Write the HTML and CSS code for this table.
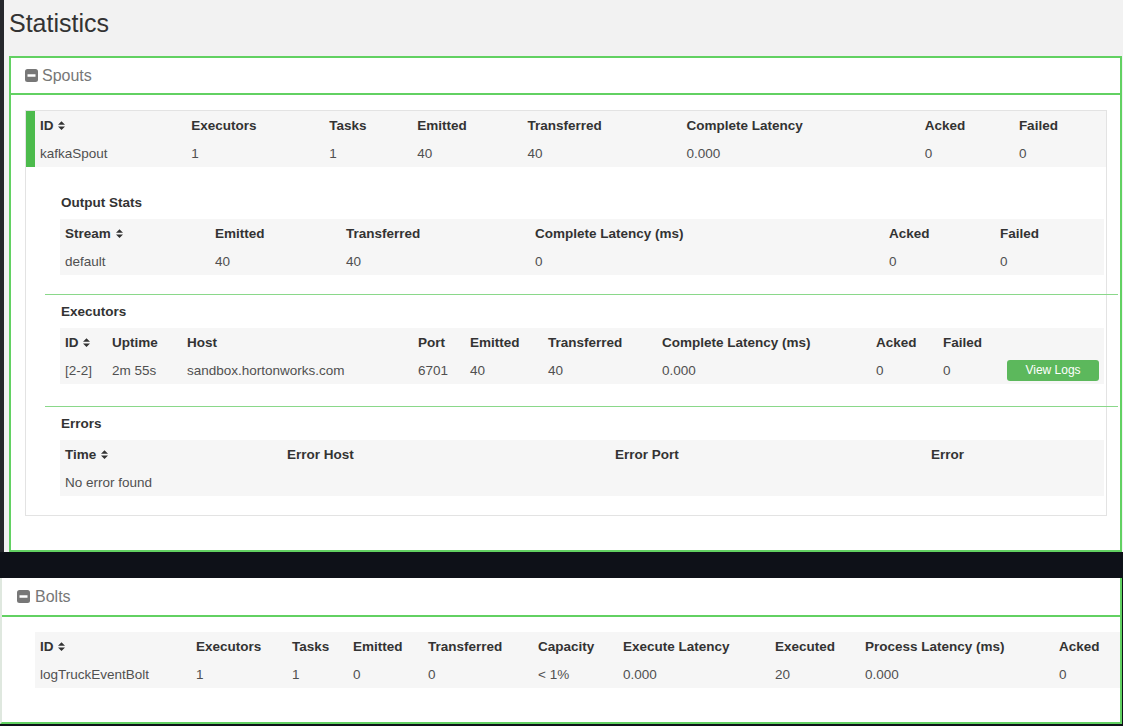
FILE: index.html
```html
<!DOCTYPE html>
<html>
<head>
<meta charset="utf-8">
<link rel="stylesheet" href="styles.css">
</head>
<body>
<div class="top">
  <h1 class="title">Statistics</h1>
  <div class="panel">
    <div class="panel-head">
      <svg class="minus" viewBox="0 0 13 13" width="13" height="13"><rect width="13" height="13" rx="2.5" fill="#777"/><rect x="2.5" y="5.25" width="8" height="2.5" fill="#fff"/></svg>
      <span>Spouts</span>
    </div>
    <div class="panel-body">
      <div class="box">
        <div class="bar">
          <table class="grid">
            <colgroup><col class="w151"><col class="w138"><col class="w88"><col class="w110"><col class="w159"><col class="w238"><col class="w94"><col class="w92"></colgroup>
            <tr><th>ID <svg class="sort" viewBox="0 0 8 12" width="7" height="11"><path d="M0 5L4 1L8 5Z M0 7L4 11L8 7Z" fill="#333"/></svg></th><th>Executors</th><th>Tasks</th><th>Emitted</th><th>Transferred</th><th>Complete Latency</th><th>Acked</th><th>Failed</th></tr>
            <tr><td>kafkaSpout</td><td>1</td><td>1</td><td>40</td><td>40</td><td>0.000</td><td>0</td><td>0</td></tr>
          </table>
        </div>
        <div class="details">
          <div class="sec sec-first">
            <div class="sec-label">Output Stats</div>
            <table class="grid">
              <colgroup><col class="w150"><col class="w131"><col class="w189"><col class="w354"><col class="w111"><col class="w109"></colgroup>
              <tr><th>Stream <svg class="sort" viewBox="0 0 8 12" width="7" height="11"><path d="M0 5L4 1L8 5Z M0 7L4 11L8 7Z" fill="#333"/></svg></th><th>Emitted</th><th>Transferred</th><th>Complete Latency (ms)</th><th>Acked</th><th>Failed</th></tr>
              <tr><td>default</td><td>40</td><td>40</td><td>0</td><td>0</td><td>0</td></tr>
            </table>
          </div>
          <div class="sec sec-mid">
            <div class="sec-label">Executors</div>
            <table class="grid">
              <colgroup><col class="w47"><col class="w75"><col class="w231"><col class="w52"><col class="w78"><col class="w114"><col class="w214"><col class="w67"><col class="w64"><col class="w102"></colgroup>
              <tr><th>ID <svg class="sort" viewBox="0 0 8 12" width="7" height="11"><path d="M0 5L4 1L8 5Z M0 7L4 11L8 7Z" fill="#333"/></svg></th><th>Uptime</th><th>Host</th><th>Port</th><th>Emitted</th><th>Transferred</th><th>Complete Latency (ms)</th><th>Acked</th><th>Failed</th><th></th></tr>
              <tr><td>[2-2]</td><td>2m 55s</td><td>sandbox.hortonworks.com</td><td>6701</td><td>40</td><td>40</td><td>0.000</td><td>0</td><td>0</td><td><span class="btn">View Logs</span></td></tr>
            </table>
          </div>
          <div class="sec sec-last">
            <div class="sec-label">Errors</div>
            <table class="grid">
              <colgroup><col class="w222"><col class="w328"><col class="w316"><col class="w178"></colgroup>
              <tr><th>Time <svg class="sort" viewBox="0 0 8 12" width="7" height="11"><path d="M0 5L4 1L8 5Z M0 7L4 11L8 7Z" fill="#333"/></svg></th><th>Error Host</th><th>Error Port</th><th>Error</th></tr>
              <tr><td>No error found</td><td></td><td></td><td></td></tr>
            </table>
          </div>
        </div>
      </div>
    </div>
  </div>
</div>
<div class="band"></div>
<div class="bolts">
  <div class="panel-head bolts-head">
    <svg class="minus" viewBox="0 0 13 13" width="13" height="13"><rect width="13" height="13" rx="2.5" fill="#777"/><rect x="2.5" y="5.25" width="8" height="2.5" fill="#fff"/></svg>
    <span>Bolts</span>
  </div>
  <div class="bolts-body">
    <table class="grid">
      <colgroup><col class="w156"><col class="w96"><col class="w61"><col class="w75"><col class="w110"><col class="w85"><col class="w152"><col class="w90"><col class="w194"><col class="w66"></colgroup>
      <tr><th>ID <svg class="sort" viewBox="0 0 8 12" width="7" height="11"><path d="M0 5L4 1L8 5Z M0 7L4 11L8 7Z" fill="#333"/></svg></th><th>Executors</th><th>Tasks</th><th>Emitted</th><th>Transferred</th><th>Capacity</th><th>Execute Latency</th><th>Executed</th><th>Process Latency (ms)</th><th>Acked</th></tr>
      <tr><td>logTruckEventBolt</td><td>1</td><td>1</td><td>0</td><td>0</td><td>&lt; 1%</td><td>0.000</td><td>20</td><td>0.000</td><td>0</td></tr>
    </table>
  </div>
</div>
</body>
</html>
```
FILE: styles.css
```css
* { box-sizing: border-box; }
html, body { margin: 0; padding: 0; }
body {
  background: #0e1118;
  font-family: "Liberation Sans", Arial, sans-serif;
  width: 1123px;
  height: 726px;
  overflow: hidden;
}
.top {
  background: #f2f2f2;
  border-left: 4px solid #26282c;
  padding: 8px 1px 0 5px;
}
.title {
  margin: 0 0 18px;
  font-size: 25px;
  line-height: 30px;
  font-weight: normal;
  color: #333;
}
.panel {
  border: 2px solid #62d162;
  background: #fff;
}
.panel-head {
  height: 37px;
  display: flex;
  align-items: center;
  gap: 4px;
  padding-left: 14px;
  border-bottom: 2px solid #62d162;
  font-size: 16px;
  color: #777;
  background: #fff;
}
.panel-body {
  padding: 15px 13px 34px 14px;
}
.box { border: 1px solid #e3e3e3; background: #fff; }
.bar { border-left: 9px solid #4cbb4c; }
.grid {
  border-collapse: collapse;
  table-layout: fixed;
  width: 100%;
  font-size: 13.5px;
}
.grid tr { background: #f6f6f6; }
.grid th, .grid td {
  height: 28px;
  padding: 0 0 0 5px;
  text-align: left;
  white-space: nowrap;
  overflow: visible;
}
.grid th { font-weight: bold; color: #333; }
.grid td { color: #505050; }
.sort { vertical-align: -1px; margin-left: 1px; }
.details { margin-left: 19px; margin-right: -12px; }
.sec { padding: 7px 14px 20px 15px; }
.sec + .sec { border-top: 1px solid #8ad88a; }
.sec-first { padding-top: 26px; padding-bottom: 19px; }
.sec-mid { padding-bottom: 22px; }
.sec-last { padding-bottom: 19px; }
.sec-label {
  font-size: 13.5px;
  font-weight: bold;
  color: #333;
  line-height: 20px;
  margin-bottom: 6px;
  padding-left: 1px;
}
.btn {
  display: inline-block;
  width: 92px;
  height: 21px;
  line-height: 21px;
  background: #5cb85c;
  color: #fff;
  font-size: 12px;
  text-align: center;
  border-radius: 3px;
  vertical-align: middle;
}
.band { height: 26px; background: #0e1118; }
.bolts {
  width: 1122px;
  background: #fff;
  border-left: 2px solid #dfe8df;
  border-right: 2px solid #62d162;
  border-bottom: 2px solid #62d162;
}
.bolts-head { height: 39px; padding-left: 15px; gap: 5px; }
.bolts-body { padding: 15px 0 34px 33px; }

.w47 { width: 47px; } .w52 { width: 52px; } .w61 { width: 61px; } .w64 { width: 64px; }
.w66 { width: 66px; } .w67 { width: 67px; } .w75 { width: 75px; } .w78 { width: 78px; }
.w85 { width: 85px; } .w88 { width: 88px; } .w90 { width: 90px; } .w92 { width: 92px; }
.w94 { width: 94px; } .w96 { width: 96px; } .w102 { width: 102px; } .w109 { width: 109px; }
.w110 { width: 110px; } .w111 { width: 111px; } .w114 { width: 114px; } .w131 { width: 131px; }
.w138 { width: 138px; } .w150 { width: 150px; } .w151 { width: 151px; } .w152 { width: 152px; }
.w156 { width: 156px; } .w159 { width: 159px; } .w178 { width: 178px; } .w189 { width: 189px; }
.w194 { width: 194px; } .w214 { width: 214px; } .w222 { width: 222px; } .w231 { width: 231px; }
.w238 { width: 238px; } .w316 { width: 316px; } .w328 { width: 328px; } .w354 { width: 354px; }
```
